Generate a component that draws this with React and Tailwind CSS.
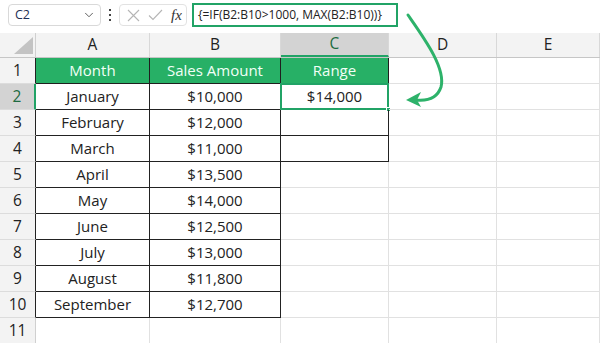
import { ChevronDown } from 'lucide-react'

const cols = ['A', 'B', 'C', 'D', 'E']
const widths = ['w-[114px]', 'w-[131px]', 'w-[108px]', 'w-[108px]', 'flex-1']

const rows = [
  ['Month', 'Sales Amount', 'Range'],
  ['January', '$10,000', '$14,000'],
  ['February', '$12,000', ''],
  ['March', '$11,000', ''],
  ['April', '$13,500'],
  ['May', '$14,000'],
  ['June', '$12,500'],
  ['July', '$13,000'],
  ['August', '$11,800'],
  ['September', '$12,700'],
  [],
]

function FormulaBar() {
  return (
    <div className="flex h-[33px] items-start pt-[4px]">
      <div className="ml-[8px] flex h-[22px] w-[93px] items-center justify-between rounded-[4px] border border-[#d9d9d9] pl-[6px] pr-[4px]">
        <span className="text-[12.5px] text-[#1d2f55]">C2</span>
        <ChevronDown size={14} strokeWidth={1.6} className="text-[#555]" />
      </div>
      <div className="ml-[8px] flex h-[22px] flex-col items-center justify-center gap-[3px]">
        <span className="h-[2px] w-[2px] bg-[#444]" />
        <span className="h-[2px] w-[2px] bg-[#444]" />
        <span className="h-[2px] w-[2px] bg-[#444]" />
      </div>
      <div className="ml-[8px] flex h-[22px] w-[68px] items-center rounded-[4px] border border-[#e2e2e2] pl-[7px]">
        <svg width="13" height="13" viewBox="0 0 13 13" className="stroke-[#b5b5b5]" strokeWidth="1.1" fill="none">
          <path d="M1 1 L12 12 M12 1 L1 12" />
        </svg>
        <svg width="15" height="12" viewBox="0 0 15 12" className="ml-[8px] stroke-[#b5b5b5]" strokeWidth="1.1" fill="none">
          <path d="M1 6.5 L5 10.5 L14 1" />
        </svg>
        <span className="ml-[8px] font-['Liberation_Serif',serif] text-[15px] italic leading-none text-[#333]">
          fx
        </span>
      </div>
      <div className="-mt-[1px] ml-[5px] flex h-[24px] w-[206px] items-center border-2 border-[#21a366] pl-[4px]">
        <span className="whitespace-nowrap text-[12px] text-[#222]">{'{=IF(B2:B10>1000, MAX(B2:B10))}'}</span>
      </div>
    </div>
  )
}

function ColumnHeader() {
  return (
    <div className="flex h-[25px] border-b border-[#c6c6c6] bg-[#f3f3f3]">
      <div className="relative w-[36px] border-r border-[#d0d0d0]">
        <svg width="19" height="17" viewBox="0 0 19 17" className="absolute bottom-[3px] right-[2px]">
          <polygon points="0,17 19,17 19,0" fill="#c3c3c3" />
        </svg>
      </div>
      {cols.map((c, i) => (
        <div
          key={c}
          className={`${widths[i]} flex items-center justify-center border-r border-[#d8d8d8] text-[15.5px] ${
            c === 'C' ? 'border-b-2 border-b-[#21a366] bg-[#d3d3d3] text-[#1e6b41]' : 'text-[#222]'
          }`}
        >
          {c}
        </div>
      ))}
    </div>
  )
}

function Row({ n, cells }) {
  const inTable = n <= 10
  const selected = n === 2
  return (
    <div className="flex h-[26px]">
      <div
        className={`flex w-[36px] items-center justify-center border-b border-[#dcdcdc] text-[15.5px] ${
          selected
            ? 'border-r-2 border-r-[#21a366] bg-[#d3d3d3] text-[#1e6b41]'
            : `bg-[#f3f3f3] text-[#222] border-r ${inTable ? 'border-r-[#222]' : 'border-r-[#d0d0d0]'}`
        }`}
      >
        {n}
      </div>
      {[0, 1, 2, 3, 4].map(i => {
        const val = cells[i]
        const bordered = (i < 2 && inTable) || (i === 2 && n <= 4)
        const head = n === 1 && i < 3
        const sel = n === 2 && i === 2
        let cls = `${widths[i]} relative flex items-center justify-center text-[15px] `
        if (head) cls += 'bg-[#27b066] text-[#f2fff6] border-r border-b border-[#1f1f1f]'
        else if (bordered) cls += 'text-[#222] border-r border-b border-[#222]'
        else cls += 'border-r border-b border-[#e1e1e1]'
        return (
          <div key={i} className={cls}>
            {sel && (
              <>
                <div className="absolute -left-px -top-px bottom-[-1px] right-[-1px] border-2 border-[#21a366]" />
                <div className="absolute bottom-[-3px] right-[-3px] h-[5px] w-[5px] border border-white bg-[#21a366]" />
              </>
            )}
            {val}
          </div>
        )
      })}
    </div>
  )
}

export default function App() {
  return (
    <div className="relative h-[343px] w-[600px] overflow-hidden bg-white font-['Open_Sans',sans-serif]">
      <FormulaBar />
      <ColumnHeader />
      {rows.map((r, i) => (
        <Row key={i} n={i + 1} cells={r} />
      ))}
      <svg className="pointer-events-none absolute left-0 top-0" width="600" height="343">
        <path
          d="M408 15 C 424 38, 446 68, 441 87 C 437 99, 426 101, 416 100"
          fill="none"
          stroke="#2db26a"
          strokeWidth="3"
          strokeLinecap="round"
        />
        <polygon points="406,100 421,92 417,100 421,107" fill="#2db26a" />
      </svg>
    </div>
  )
}
